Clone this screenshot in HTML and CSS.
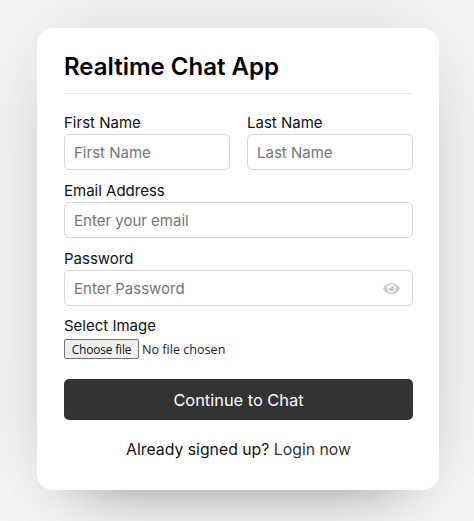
FILE: index.html
```html
<!DOCTYPE html>
<html lang="en">
<head>
    <meta charset="UTF-8">
    <meta name="viewport" content="width=device-width, initial-scale=1.0">
    <title>Realtime Chat App</title>
    <link rel="stylesheet" href="styles.css">
</head>
<body>
    <section class="wrapper">
        <header class="title">Realtime Chat App</header>
        <form class="signup-form" onsubmit="return false">
            <div class="name-row">
                <div class="field">
                    <label for="fname">First Name</label>
                    <input type="text" id="fname" placeholder="First Name">
                </div>
                <div class="field">
                    <label for="lname">Last Name</label>
                    <input type="text" id="lname" placeholder="Last Name">
                </div>
            </div>
            <div class="field">
                <label for="email">Email Address</label>
                <input type="text" id="email" placeholder="Enter your email">
            </div>
            <div class="field password-field">
                <label for="password">Password</label>
                <input type="password" id="password" placeholder="Enter Password">
                <svg class="eye-icon" viewBox="0 0 576 512" aria-hidden="true">
                    <path d="M572.52 241.4C518.29 135.59 410.93 64 288 64S57.68 135.64 3.48 241.41a32.35 32.35 0 0 0 0 29.19C57.71 376.41 165.07 448 288 448s230.32-71.64 284.52-177.41a32.35 32.35 0 0 0 0-29.19zM288 400a144 144 0 1 1 144-144 143.93 143.93 0 0 1-144 144zm0-240a95.31 95.31 0 0 0-25.31 3.79 47.85 47.85 0 0 1-66.9 66.9A95.78 95.78 0 1 0 288 160z"/>
                </svg>
            </div>
            <div class="field image-field">
                <label>Select Image</label>
                <div class="file-picker">
                    <button class="file-btn" type="button">Choose file</button>
                    <span class="file-name">No file chosen</span>
                </div>
            </div>
            <button class="submit-btn" type="submit">Continue to Chat</button>
        </form>
        <p class="login-link">Already signed up? <a href="#">Login now</a></p>
    </section>
</body>
</html>
```

FILE: styles.css
```css
* {
    box-sizing: border-box;
    margin: 0;
    padding: 0;
}
body {
    height: 521px;
    padding: 28px 35px 31px 37px;
    background: #f7f7f7;
    font-family: "Inter", "Liberation Sans", sans-serif;
    overflow: hidden;
}
.wrapper {
    height: 462px;
    padding: 23px 26px 0 27px;
    background: #fff;
    border-radius: 16px;
    box-shadow: 0 0 114px 0 rgba(0, 0, 0, 0.12), 0 29px 57px -43px rgba(0, 0, 0, 0.5);
}
.title {
    height: 43px;
    margin-right: 1px;
    border-bottom: 1px solid #e6e6e6;
    font-size: 24px;
    line-height: 31px;
    font-weight: 600;
    color: #000;
}
.signup-form {
    padding-top: 19px;
}
.name-row {
    display: flex;
    gap: 17px;
}
.name-row .field {
    flex: 1;
}
.field {
    position: relative;
    margin-bottom: 11px;
}
.field label {
    display: block;
    height: 21px;
    font-size: 15px;
    line-height: 20px;
    color: #111;
}
.field input {
    display: block;
    width: 100%;
    height: 36px;
    padding: 0 9px;
    border: 1px solid #d5d5d5;
    border-radius: 5px;
    outline: none;
    font-family: inherit;
    font-size: 15px;
}
.field input::placeholder {
    color: #757575;
}
.password-field {
    margin-bottom: 10px;
}
.eye-icon {
    position: absolute;
    right: 13px;
    top: 32px;
    width: 17px;
    height: 15px;
    fill: #ccc;
}
.image-field {
    margin-bottom: 20px;
}
.image-field label {
    height: 23px;
}
.file-picker {
    display: flex;
    align-items: center;
    height: 20px;
    font-family: "Open Sans", "Liberation Sans", sans-serif;
    font-size: 12.6px;
    color: #222;
}
.file-btn {
    width: 75px;
    height: 20px;
    margin-right: 3px;
    border: 1px solid #767676;
    border-radius: 2px;
    background: #efefef;
    font-family: inherit;
    font-size: 12px;
    letter-spacing: -0.2px;
    color: #111;
}
.submit-btn {
    display: block;
    width: 100%;
    height: 41px;
    border: none;
    border-radius: 5px;
    background: #333;
    color: #fff;
    font-family: inherit;
    font-size: 16.4px;
    cursor: pointer;
}
.login-link {
    margin-top: 19px;
    text-align: center;
    font-size: 15.8px;
    line-height: 22px;
    color: #111;
}
.login-link a {
    color: #333;
    text-decoration: none;
}
```
